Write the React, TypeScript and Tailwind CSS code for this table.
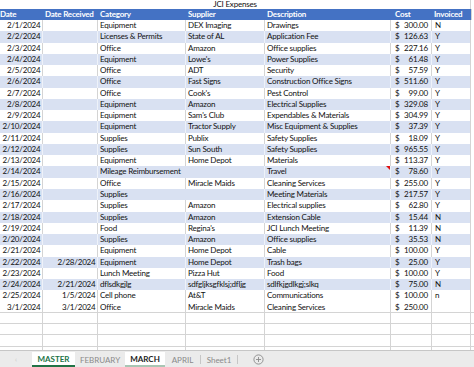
import React from "react";

type Row = [string, string, string, string, string, string, string];

const data: Row[] = [
  ["2/1/2024", "", "Equipment", "DEX Imaging", "Drawings", "300.00", "N"],
  ["2/2/2024", "", "Licenses & Permits", "State of AL", "Application Fee", "126.63", "Y"],
  ["2/3/2024", "", "Office", "Amazon", "Office supplies", "227.16", "Y"],
  ["2/4/2024", "", "Equipment", "Lowe's", "Power Supplies", "61.48", "Y"],
  ["2/5/2024", "", "Office", "ADT", "Security", "57.59", "Y"],
  ["2/6/2024", "", "Office", "Fast Signs", "Construction Office Signs", "511.60", "Y"],
  ["2/7/2024", "", "Office", "Cook's", "Pest Control", "99.00", "Y"],
  ["2/8/2024", "", "Equipment", "Amazon", "Electrical Supplies", "329.08", "Y"],
  ["2/9/2024", "", "Equipment", "Sam's Club", "Expendables & Materials", "304.99", "Y"],
  ["2/10/2024", "", "Equipment", "Tractor Supply", "Misc Equipment & Supplies", "37.39", "Y"],
  ["2/11/2024", "", "Supplies", "Publix", "Safety Supplies", "18.09", "Y"],
  ["2/12/2024", "", "Supplies", "Sun South", "Safety Supplies", "965.55", "Y"],
  ["2/13/2024", "", "Equipment", "Home Depot", "Materials", "113.37", "Y"],
  ["2/14/2024", "", "Mileage Reimbursement", "", "Travel", "78.60", "Y"],
  ["2/15/2024", "", "Office", "Miracle Maids", "Cleaning Services", "255.00", "Y"],
  ["2/16/2024", "", "Supplies", "", "Meeting Materials", "217.57", "Y"],
  ["2/17/2024", "", "Supplies", "Amazon", "Electrical supplies", "62.80", "Y"],
  ["2/18/2024", "", "Supplies", "Amazon", "Extension Cable", "15.44", "N"],
  ["2/19/2024", "", "Food", "Regina's", "JCI Lunch Meeting", "11.39", "N"],
  ["2/20/2024", "", "Supplies", "Amazon", "Office supplies", "35.53", "N"],
  ["2/21/2024", "", "Equipment", "Home Depot", "Cable", "100.00", "Y"],
  ["2/22/2024", "2/28/2024", "Equipment", "Home Depot", "Trash bags", "25.00", "Y"],
  ["2/23/2024", "", "Lunch Meeting", "Pizza Hut", "Food", "100.00", "Y"],
  ["2/24/2024", "2/21/2024", "dflsdkgjlg", "sdfgljksgfklsj;dfljg", "sdlfkjgdlkgj;slkq", "75.00", "N"],
  ["2/25/2024", "1/5/2024", "Cell phone", "At&T", "Communications", "100.00", "n"],
];

const extra: Row = ["3/1/2024", "3/1/2024", "Office", "Miracle Maids", "Cleaning Services", "250.00", ""];

function DataRow({ row, shaded, inTable, note }: { row: Row; shaded: boolean; inTable: boolean; note?: boolean }) {
  const line = shaded ? "border-[#eef2f9]" : "border-[#d4d4d4]";
  const bg = shaded ? "bg-[#d9e1f2]" : "bg-white";
  const bottom = inTable ? "" : "border-b border-b-[#d4d4d4]";
  const spill = row[3] === "";
  return (
    <div className={`flex h-[11.27px] shrink-0 leading-[11px] whitespace-nowrap ${bottom}`}>
      <div className={`w-[43px] shrink-0 border-r ${line} ${bg} pr-[1.5px] text-right`}>{row[0]}</div>
      <div className={`w-[55px] shrink-0 border-r ${line} ${bg} pr-[1.5px] text-right`}>{row[1]}</div>
      <div className={`w-[88px] shrink-0 ${spill ? "" : "border-r overflow-hidden"} ${line} ${bg} pl-[2px]`}>
        {row[2]}
      </div>
      <div className={`w-[79px] shrink-0 border-r ${line} ${bg} pl-[2px] overflow-hidden`}>{row[3]}</div>
      <div className={`relative w-[126px] shrink-0 border-r ${line} ${bg} pl-[2px] overflow-hidden`}>
        {row[4]}
        {note && (
          <span className="absolute right-0 top-0 h-0 w-0 border-l-[4px] border-t-[4px] border-l-transparent border-t-[#e01010]" />
        )}
      </div>
      <div className={`flex w-[41px] shrink-0 justify-between border-r ${line} ${bg} pl-[4px] pr-[3px]`}>
        <span>$</span>
        <span>{row[5]}</span>
      </div>
      <div className={`w-[39px] shrink-0 border-r border-[#d4d4d4] ${bg} pl-[3px]`}>{row[6]}</div>
      <div className="flex-1 bg-white" />
    </div>
  );
}

function EmptyRow() {
  return (
    <div className="flex h-[11.27px] shrink-0 border-b border-[#d4d4d4]">
      <div className="w-[43px] shrink-0 border-r border-[#d4d4d4]" />
      <div className="w-[55px] shrink-0 border-r border-[#d4d4d4]" />
      <div className="w-[88px] shrink-0 border-r border-[#d4d4d4]" />
      <div className="w-[79px] shrink-0 border-r border-[#d4d4d4]" />
      <div className="w-[126px] shrink-0 border-r border-[#d4d4d4]" />
      <div className="w-[41px] shrink-0 border-r border-[#d4d4d4]" />
      <div className="w-[39px] shrink-0 border-r border-[#d4d4d4]" />
    </div>
  );
}

export default function App() {
  return (
    <div className="flex h-[367px] w-[474px] flex-col overflow-hidden bg-white font-[Lato,'Liberation_Sans',sans-serif] text-[8px] tracking-[-0.2px] text-[#111]">
      <div className="flex min-h-0 flex-1 flex-col overflow-hidden">
        {/* title row */}
        <div className="flex h-[9px] shrink-0">
          <div className="w-[471px] border-r border-[#d4d4d4] text-center leading-[8px]">JCI Expenses</div>
        </div>

        {/* header */}
        <div className="flex h-[11px] shrink-0 whitespace-nowrap font-bold leading-[11px] text-white">
          <div className="flex w-[471px] bg-[#4472c4]">
            <div className="w-[43px] shrink-0">Date</div>
            <div className="w-[55px] shrink-0 pl-[2px]">Date Received</div>
            <div className="w-[88px] shrink-0 pl-[2px]">Category</div>
            <div className="w-[79px] shrink-0 pl-[2px]">Supplier</div>
            <div className="w-[126px] shrink-0 pl-[2px]">Description</div>
            <div className="w-[41px] shrink-0 pl-[4px]">Cost</div>
            <div className="w-[39px] shrink-0 pl-[2px]">Invoiced</div>
          </div>
          <div className="flex-1 border-l border-[#d4d4d4] bg-white" />
        </div>

        {data.map((r, i) => (
          <DataRow key={i} row={r} shaded={i % 2 === 1} inTable note={i === 13} />
        ))}
        <DataRow row={extra} shaded={false} inTable={false} />
        <EmptyRow />
        <EmptyRow />
        <EmptyRow />
        <EmptyRow />
      </div>

      {/* sheet tabs */}
      <div className="flex h-[17px] shrink-0 items-stretch border-t border-[#c6c6c6] bg-[#ebebeb] pt-[1px] text-[8px] leading-none tracking-normal">
        <div className="flex w-[32px] items-center justify-center text-[7px] text-[#c8c8c8]">‹</div>
        <div className="flex w-[43px] items-center justify-center border-b-2 border-[#217346] bg-white font-bold text-[#217346]">
          MASTER
        </div>
        <div className="flex w-[50px] items-center justify-center text-[#8a8a8a]">FEBRUARY</div>
        <div className="flex w-[40px] items-center justify-center border-b-2 border-[#a9c6b4] bg-white font-bold text-[#222]">
          MARCH
        </div>
        <div className="flex w-[35px] items-center justify-center text-[#8a8a8a]">APRIL</div>
        <div className="my-[3px] w-px bg-[#c6c6c6]" />
        <div className="flex w-[36px] items-center justify-center text-[#8a8a8a]">Sheet1</div>
        <div className="my-[3px] w-px bg-[#c6c6c6]" />
        <div className="flex w-[40px] items-center justify-center">
          <svg width="11" height="11" viewBox="0 0 11 11" fill="none" stroke="#8a8a8a" strokeWidth="0.9">
            <circle cx="5.5" cy="5.5" r="4.6" />
            <path d="M5.5 3v5M3 5.5h5" />
          </svg>
        </div>
      </div>
    </div>
  );
}
